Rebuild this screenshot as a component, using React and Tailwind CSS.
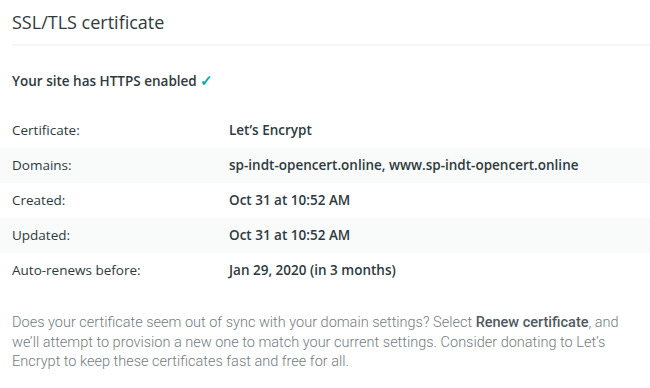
import React from 'react';

const rows = [
  { label: 'Certificate:', value: 'Let’s Encrypt' },
  { label: 'Domains:', value: 'sp-indt-opencert.online, www.sp-indt-opencert.online' },
  { label: 'Created:', value: 'Oct 31 at 10:52 AM' },
  { label: 'Updated:', value: 'Oct 31 at 10:52 AM' },
  { label: 'Auto-renews before:', value: 'Jan 29, 2020 (in 3 months)' },
];

export default function App() {
  return (
    <div className="w-[650px] h-[388px] bg-white overflow-hidden text-[#2e3a40]" style={{ fontFamily: '"Open Sans", "Noto Sans", sans-serif' }}>
      {/* Заголовок */}
      <div className="pl-3">
        <h2 className="text-[18px] leading-[24px] pt-[10px] pb-[10px] font-normal">SSL/TLS certificate</h2>
        <div className="h-[2px] bg-[#f5f6f6]" />
      </div>

      <p className="pl-3 pt-[24px] text-[13.5px] leading-[20px] font-semibold">
        Your site has HTTPS enabled <span className="text-[#00ad9f] text-[15px]">✓</span>
      </p>

      {/* Таблица */}
      <div className="mt-[22px]">
        {rows.map((row, i) => (
          <div
            key={row.label}
            className={`flex items-center h-[35px] pl-3 text-[13.5px] ${i % 2 === 1 ? 'bg-[#f9fafa]' : ''}`}
          >
            <div className="w-[217px] shrink-0">{row.label}</div>
            <div className="font-semibold">{row.value}</div>
          </div>
        ))}
      </div>

      <p
        className="pl-3 mt-[25px] text-[14.5px] leading-[19.5px] text-[#737c81] font-light whitespace-nowrap"
        style={{ fontFamily: 'Roboto, sans-serif' }}
      >
        Does your certificate seem out of sync with your domain settings? Select{' '}
        <span className="font-medium text-[#4f5a5f]">Renew certificate</span>, and
        <br />
        we’ll attempt to provision a new one to match your current settings. Consider donating to Let’s
        <br />
        Encrypt to keep these certificates fast and free for all.
      </p>
    </div>
  );
}
